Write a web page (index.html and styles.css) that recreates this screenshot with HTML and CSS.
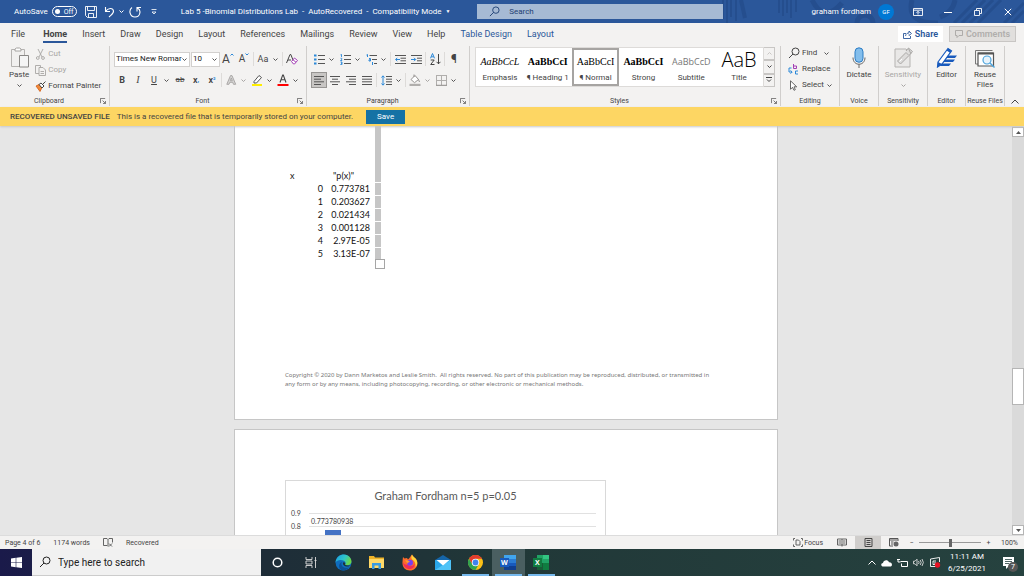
FILE: index.html
```html
<!DOCTYPE html>
<html lang="en">
<head>
<meta charset="utf-8">
<title>Lab 5 -Binomial Distributions Lab</title>
<link rel="stylesheet" href="styles.css">
</head>
<body>

<svg class="defs" aria-hidden="true">
  <symbol id="chev" viewBox="0 0 5 3"><path d="M.5 .5l2 2 2-2" fill="none" stroke="currentColor"/></symbol>
  <symbol id="caret" viewBox="0 0 8 5"><path d="M.5 4.500L4 1l3.500 3.500" fill="none" stroke="currentColor"/></symbol>
  <symbol id="launch" viewBox="0 0 7 7"><path d="M.5 6V.5H6M3 3l3 3M6.5 3.500v3h-3" fill="none" stroke="currentColor" stroke-width=".8"/></symbol>
  <symbol id="lens" viewBox="0 0 12 12"><circle cx="7.500" cy="4.500" r="3.500" fill="none" stroke="currentColor"/><path d="M5 7L1 11" stroke="currentColor"/></symbol>
</svg>

<header class="titlebar">
  <svg class="pattern" viewBox="0 0 304 23" preserveAspectRatio="xMaxYMin slice" aria-hidden="true">
    <g stroke="#254e8e" fill="none">
      <path stroke-width="2" d="M3 0v19M7 0v23M11 0v17M16 0v21M59 0v13M63 0v16M67 0v13M71 0v18M76 0v12"/>
      <path stroke-width="4" d="M21 0l4 18"/>
      <path stroke-width="5" d="M92 0q12 24 30 3M137 23a8 8 0 0 1 16 0M192 0q-6 24 26 23M235 0q-2 12-15 17"/>
      <path stroke-width="3" d="M234 23L257 0M242 23L265 0M250 23L273 0M258 23L281 0M284 23L304 3M292 23L304 11"/>
    </g>
  </svg>
  <div class="title-left">
    <label class="autosave" for="autosave">AutoSave <span class="switch"><input type="checkbox" id="autosave">Off</span></label>
    <div class="quick">
      <button aria-label="Save"><svg width="12" height="12" viewBox="0 0 12 12"><path d="M.5 .5h11v11h-9l-2-2zM2.500 .5v4h7v-4M3.500 11.500v-4h5v4" fill="none" stroke="#fff" stroke-width=".9"/></svg></button>
      <button aria-label="Undo"><svg width="11" height="12" viewBox="0 0 11 12"><path d="M1.500 1v4.500H6M1.500 5.500C4 1.500 9 1.500 9.500 5c.3 2.500-2.500 4-4.500 6" fill="none" stroke="#fff" stroke-width="1.100"/></svg></button>
      <svg class="chev" width="5" height="3"><use href="#chev"/></svg>
      <button class="redo" aria-label="Redo"><svg width="12" height="12" viewBox="0 0 12 12"><path d="M3 1.500C-.5 4 .5 11 6 11s6.500-7 2.500-9M8 5.500V1.500h4" fill="none" stroke="#fff" stroke-width="1.100"/></svg></button>
      <button aria-label="Customize"><svg width="6" height="6" viewBox="0 0 6 6"><path d="M.5 .5h5M1 3l2 2 2-2z" fill="none" stroke="#fff" stroke-width=".8"/></svg></button>
    </div>
    <h1>Lab 5 -Binomial Distributions Lab&nbsp; -&nbsp; AutoRecovered&nbsp; -&nbsp; Compatibility Mode <span class="tri">▼</span></h1>
  </div>
  <div class="title-search">
    <svg width="11" height="11"><use href="#lens"/></svg>
    <input type="text" placeholder="Search" aria-label="Search">
  </div>
  <div class="title-right">
    <span>graham fordham</span>
    <span class="avatar">GF</span>
    <button aria-label="Ribbon display"><svg width="10" height="8" viewBox="0 0 10 8"><path d="M.5 .5h9v7h-9zM.5 2.200h9M5 6.500v-3M3.500 4.800L5 3.300l1.500 1.500" fill="none" stroke="#fff" stroke-width=".9"/></svg></button>
    <button aria-label="Minimize"><svg width="8" height="8" viewBox="0 0 8 8"><path d="M0 4.500h8" stroke="#fff"/></svg></button>
    <button aria-label="Restore"><svg width="8" height="8" viewBox="0 0 8 8"><path d="M.5 2.500h5v5h-5zM2.500 2.500v-2h5v5h-2" fill="none" stroke="#fff" stroke-width=".9"/></svg></button>
    <button aria-label="Close"><svg width="8" height="8" viewBox="0 0 8 8"><path d="M.8 .8l6.400 6.400M7.200 .8L.8 7.200" stroke="#fff"/></svg></button>
  </div>
</header>

<nav class="tabs">
  <a href="#" class="file">File</a>
  <a href="#" class="active">Home</a>
  <a href="#">Insert</a>
  <a href="#">Draw</a>
  <a href="#">Design</a>
  <a href="#">Layout</a>
  <a href="#">References</a>
  <a href="#">Mailings</a>
  <a href="#">Review</a>
  <a href="#">View</a>
  <a href="#">Help</a>
  <a href="#" class="context">Table Design</a>
  <a href="#" class="context">Layout</a>
  <div class="tab-actions">
    <button class="share"><svg width="9" height="9" viewBox="0 0 9 9"><path d="M3 3.500H.5v5h7V6M2.500 6C3 3.500 4.500 3 6 3V1l2.500 2.500L6 5.500v-1" fill="none" stroke="#2b579a" stroke-width=".9"/></svg>Share</button>
    <button class="comments" disabled><svg width="8" height="8" viewBox="0 0 8 8"><path d="M.5 .5h7v5H4l-2 2v-2H.5z" fill="none" stroke="#a8a6a4" stroke-width=".9"/></svg>Comments</button>
  </div>
</nav>

<section class="ribbon">
  <div class="group clipboard">
    <div class="body">
      <button class="big">
        <svg width="19" height="21" viewBox="0 0 19 21"><path d="M1.500 2.500h13v17h-13z" fill="#f1f0ef" stroke="#b5b3b1"/><path d="M5 4V2l1.500-1h3L11 2v2z" fill="#fff" stroke="#a5a3a1"/><path d="M9.500 8.500h9v11.500h-9z" fill="#f5f5f5" stroke="#8a8886"/></svg>
        Paste
        <svg class="chev" width="5" height="3"><use href="#chev"/></svg>
      </button>
      <div class="stack">
        <button class="off"><svg width="11" height="11" viewBox="0 0 11 11"><g fill="none" stroke="#a8a6a4" stroke-width=".9"><path d="M3 0l4 8M8 0L4 8"/><circle cx="2.800" cy="9" r="1.400"/><circle cx="8" cy="9" r="1.400"/></g></svg>Cut</button>
        <button class="off"><svg width="11" height="11" viewBox="0 0 11 11"><g fill="#f3f2f1" stroke="#a8a6a4" stroke-width=".9"><path d="M.5 .5h5v8h-5z"/><path d="M4 2.500h4l2.500 2.500v5.500H4z"/><path d="M5.500 6.500h3.500M5.500 8.500h3.500"/></g></svg>Copy</button>
        <button><svg width="11" height="11" viewBox="0 0 11 11"><path d="M1 5l3-1.500 3 3L5 10.500z" fill="#f08a3c" stroke="#d35c12" stroke-width=".8"/><path d="M4 3.500L6 2l3 3-2 2zM8 3l2.500-2.500" fill="#fff" stroke="#444" stroke-width="1"/></svg>Format Painter</button>
      </div>
    </div>
    <div class="label more">Clipboard <svg class="launch" width="6" height="6"><use href="#launch"/></svg></div>
  </div>

  <div class="group font">
    <div class="body rows">
      <div class="row">
        <span class="combo name"><input type="text" value="Times New Romar" aria-label="Font"><svg class="chev" width="5" height="3"><use href="#chev"/></svg></span>
        <span class="combo size"><input type="text" value="10" aria-label="Font size"><svg class="chev" width="5" height="3"><use href="#chev"/></svg></span>
        <button class="ico grow" aria-label="Grow font">A<svg width="4" height="3" viewBox="0 0 4 3"><path d="M.5 2.500L2 1l1.500 1.500" fill="none" stroke="#2b88d8"/></svg></button>
        <button class="ico shrink" aria-label="Shrink font">A<svg width="4" height="3" viewBox="0 0 4 3"><path d="M.5 .5L2 2 3.500 .5" fill="none" stroke="#2b88d8"/></svg></button>
        <i class="sep"></i>
        <button class="ico case">Aa</button><svg class="chev" width="5" height="3"><use href="#chev"/></svg>
        <i class="sep"></i>
        <button class="ico" aria-label="Clear formatting"><svg width="12" height="12" viewBox="0 0 12 12"><path d="M.5 10L4 1.500h.8L7 7M2 7h3" fill="none" stroke="#444" stroke-width="1"/><path d="M5.500 8.500l3-3.500 3 2.500-3 3.500h-1z" fill="#fff" stroke="#a33fb5"/><path d="M7 6.800l3 2.500" stroke="#a33fb5"/></svg></button>
      </div>
      <div class="row">
        <button class="ico bold">B</button>
        <button class="ico italic">I</button>
        <button class="ico under">U</button><svg class="chev" width="5" height="3"><use href="#chev"/></svg>
        <button class="ico strike">ab</button>
        <button class="ico script">x<sub>,</sub></button>
        <button class="ico script">x<sup>²</sup></button>
        <i class="sep"></i>
        <button class="ico" aria-label="Text effects"><svg width="11" height="10" viewBox="0 0 11 10"><path d="M.8 9.300L4.500 .6h1.500l3.700 8.700H7.500l-.8-2H3.800l-.8 2zM4.300 5.700h2L5.300 3z" fill="#d6d5d4" stroke="#a5a3a1" stroke-width=".9"/></svg></button><svg class="chev dim" width="5" height="3"><use href="#chev"/></svg>
        <button class="ico" aria-label="Highlight"><svg width="12" height="12" viewBox="0 0 12 12"><path d="M3 7.500L8 1.500l2.500 2-5 5.500H3z" fill="#fff" stroke="#555"/><path d="M1 10h10v2H1z" fill="#ffee00"/></svg></button><svg class="chev" width="5" height="3"><use href="#chev"/></svg>
        <button class="ico" aria-label="Font color"><svg width="12" height="12" viewBox="0 0 12 12"><path d="M3 8.500L5.700 1h.6L9 8.500M4 5.800h4" fill="none" stroke="#444" stroke-width="1.100"/><path d="M.5 10h11v2H.5z" fill="#f00"/></svg></button><svg class="chev" width="5" height="3"><use href="#chev"/></svg>
      </div>
    </div>
    <div class="label more">Font <svg class="launch" width="6" height="6"><use href="#launch"/></svg></div>
  </div>

  <div class="group paragraph">
    <div class="body rows">
      <div class="row">
        <button class="ico" aria-label="Bullets"><svg width="11" height="11" viewBox="0 0 11 11"><path d="M0 1.500h2.500M0 5.500h2.500M0 9.500h2.500" stroke="#2b88d8" stroke-width="2"/><path d="M4 1.500h7M4 5.500h7M4 9.500h7" stroke="#555"/></svg></button><svg class="chev" width="5" height="3"><use href="#chev"/></svg>
        <button class="ico" aria-label="Numbering"><svg width="11" height="11" viewBox="0 0 11 11"><path d="M.5 .8l1-.5V3M.5 4.300h1.300v1L.5 6.500h1.700M.5 8h1.500v1.200H1h1v1.400H.3" fill="none" stroke="#2b88d8" stroke-width=".9"/><path d="M4 1.500h7M4 5.500h7M4 9.500h7" stroke="#555"/></svg></button><svg class="chev" width="5" height="3"><use href="#chev"/></svg>
        <button class="ico" aria-label="Multilevel list"><svg width="11" height="11" viewBox="0 0 11 11"><path d="M.5 1l1-.5V3M3 4.500h1.500V7H3V5.800h1.500M6.500 8v3" fill="none" stroke="#2b88d8"/><path d="M3.500 1.500H11M6 5.500h5M8 9.500h3" stroke="#555"/></svg></button><svg class="chev" width="5" height="3"><use href="#chev"/></svg>
        <i class="sep"></i>
        <button class="ico" aria-label="Decrease indent"><svg width="11" height="9" viewBox="0 0 11 9"><path d="M0 .5h11M5.500 3.200H11M5.500 5.800H11M0 8.500h11" stroke="#555"/><path d="M5 4.500H.8M2.300 2.800L.6 4.500l1.700 1.700" fill="none" stroke="#2b88d8"/></svg></button>
        <button class="ico" aria-label="Increase indent"><svg width="11" height="9" viewBox="0 0 11 9"><path d="M0 .5h11M6 3.200h5M6 5.800h5M0 8.500h11" stroke="#555"/><path d="M0 4.500h4.500M3 2.800l1.700 1.700L3 6.200" fill="none" stroke="#2b88d8"/></svg></button>
        <i class="sep"></i>
        <button class="ico" aria-label="Sort"><svg width="11" height="12" viewBox="0 0 11 12"><path d="M.5 5.300L2.500 .5l2 4.800M1.200 3.800h2.600" fill="none" stroke="#2b88d8"/><path d="M.7 7h3.500L.7 11.500h3.800M8.500 1v10M6.500 8.800l2 2 2-2" fill="none" stroke="#444"/></svg></button>
        <i class="sep"></i>
        <button class="ico pilcrow">¶</button>
      </div>
      <div class="row">
        <button class="ico on" aria-label="Align left"><svg width="10" height="9" viewBox="0 0 10 9"><path d="M0 .5h10M0 3.200h7M0 5.800h10M0 8.500h7" stroke="#555"/></svg></button>
        <button class="ico" aria-label="Center"><svg width="10" height="9" viewBox="0 0 10 9"><path d="M0 .5h10M2 3.200h6M0 5.800h10M2 8.500h6" stroke="#555"/></svg></button>
        <button class="ico" aria-label="Align right"><svg width="10" height="9" viewBox="0 0 10 9"><path d="M0 .5h10M3 3.200h7M0 5.800h10M3 8.500h7" stroke="#555"/></svg></button>
        <button class="ico" aria-label="Justify"><svg width="10" height="9" viewBox="0 0 10 9"><path d="M0 .5h10M0 3.200h10M0 5.800h10M0 8.500h10" stroke="#555"/></svg></button>
        <i class="sep"></i>
        <button class="ico" aria-label="Line spacing"><svg width="11" height="11" viewBox="0 0 11 11"><path d="M2 1v9M.5 2.500L2 .8l1.500 1.700M.5 8.500L2 10.200l1.500-1.700" fill="none" stroke="#2b88d8"/><path d="M5 1.500h6M5 4.200h6M5 6.800h6M5 9.500h6" stroke="#555"/></svg></button><svg class="chev" width="5" height="3"><use href="#chev"/></svg>
        <i class="sep"></i>
        <button class="ico" aria-label="Shading"><svg width="12" height="12" viewBox="0 0 12 12"><path d="M2 5.500L6 1.500l3.500 4-4 3.200zM5 3V.5M9.500 5.500l1 2.500" fill="#fff" stroke="#8a8886" stroke-width=".9"/><path d="M.5 9.800h11V12H.5z" fill="#b0aeac"/></svg></button><svg class="chev dim" width="5" height="3"><use href="#chev"/></svg>
        <button class="ico" aria-label="Borders"><svg width="11" height="11" viewBox="0 0 11 11"><path d="M.5 0v10M5.500 0v10M10.500 0v10M0 .5h11M0 5.500h11" stroke="#b0aeac"/><path d="M0 10.300h11" stroke="#8a8886"/></svg></button><svg class="chev" width="5" height="3"><use href="#chev"/></svg>
      </div>
    </div>
    <div class="label more">Paragraph <svg class="launch" width="6" height="6"><use href="#launch"/></svg></div>
  </div>

  <div class="group styles">
    <div class="body">
      <div class="gallery">
        <button><span class="sample it">AaBbCcL</span>Emphasis</button>
        <button><span class="sample b">AaBbCcI</span>¶ Heading 1</button>
        <button class="picked"><span class="sample">AaBbCcI</span>¶ Normal</button>
        <button><span class="sample b">AaBbCcI</span>Strong</button>
        <button><span class="sample sub">AaBbCcD</span>Subtitle</button>
        <button><span class="sample ttl">AaB</span>Title</button>
      </div>
      <div class="gallery-nav">
        <button disabled aria-label="Up"><svg class="flip" width="5" height="3"><use href="#chev"/></svg></button>
        <button aria-label="Down"><svg width="5" height="3"><use href="#chev"/></svg></button>
        <button aria-label="More"><svg width="6" height="6" viewBox="0 0 6 6"><path d="M0 .5h6M1 2.500l2 2 2-2" fill="none" stroke="#444"/></svg></button>
      </div>
    </div>
    <div class="label more">Styles <svg class="launch" width="6" height="6"><use href="#launch"/></svg></div>
  </div>

  <div class="group editing">
    <div class="body">
      <div class="stack">
        <button><svg width="12" height="12"><use href="#lens"/></svg>Find <svg class="chev find" width="5" height="3"><use href="#chev"/></svg></button>
        <button><svg width="12" height="11" viewBox="0 0 12 11"><path d="M5.500 0v4.500h3v-2.500h-3" fill="none" stroke="#a33fb5"/><path d="M3.500 4H1v4h3M2.500 6.500L4.200 8 2.500 9.700M10 7H7.500v3H10" fill="none" stroke="#2b88d8"/></svg>Replace</button>
        <button><svg width="12" height="11" viewBox="0 0 12 11"><path d="M2.500 .8v8.500l2-2 1.500 3 1.300-.6L6 6.800h2.700z" fill="#fff" stroke="#555" stroke-width=".9"/></svg>Select <svg class="chev" width="5" height="3"><use href="#chev"/></svg></button>
      </div>
    </div>
    <div class="label">Editing</div>
  </div>

  <div class="group voice">
    <div class="body">
      <button class="big"><svg width="14" height="21" viewBox="0 0 14 21"><rect x="3" y=".8" width="8" height="14.500" rx="4" fill="#83beec" stroke="#2b7cc4"/><path d="M1 10.500c0 9 12 9 12 0M7 17.500V21" fill="none" stroke="#666"/></svg>Dictate</button>
    </div>
    <div class="label">Voice</div>
  </div>

  <div class="group sensitivity">
    <div class="body">
      <button class="big off"><svg width="19" height="21" viewBox="0 0 19 21"><path d="M1 2h11l4 4v14H1z" fill="#e9e8e7" stroke="#b5b3b1"/><path d="M3.500 14L12 5.500l3 3L6.500 17zM12 4l2.500-3 4 3.500-3 3.500M14.500 1.500L17 7" fill="#dddcdb" stroke="#aaa8a6"/><path d="M5.500 14.500L8 12" stroke="#fff"/></svg>Sensitivity<svg class="chev" width="5" height="3"><use href="#chev"/></svg></button>
    </div>
    <div class="label">Sensitivity</div>
  </div>

  <div class="group editor">
    <div class="body">
      <button class="big"><svg width="21" height="21" viewBox="0 0 21 21"><path d="M8 8.500h13l-2 2.600H7zM6 12.500h13l-2 2.600H5zM5 16.500h10l-2 2.600H4z" fill="#185abd"/><path d="M2 15L12 1.500l3.500 2.300L6 17l-4.500 3z" fill="#fff" stroke="#185abd" stroke-width="1.200"/><path d="M2 15l4 2-4.500 3zM12 1.500l3.500 2.300-1.500 2-3.500-2.300z" fill="#185abd"/></svg>Editor</button>
    </div>
    <div class="label">Editor</div>
  </div>

  <div class="group reuse">
    <div class="body">
      <button class="big"><svg width="21" height="21" viewBox="0 0 21 21"><path d="M1.500 17V3.500h17M1.500 17H4" fill="none" stroke="#777"/><path d="M4 6h15.500v13H4z" fill="#fff" stroke="#555" stroke-width="1.200"/><path d="M4 6.500h15.500" stroke="#555" stroke-width="2"/><circle cx="13" cy="13" r="4" fill="#e8f3fb" stroke="#4ba3dc" stroke-width="1.200"/><path d="M16 16l4.500 4.500" stroke="#4ba3dc" stroke-width="1.400"/></svg>Reuse<br>Files</button>
    </div>
    <div class="label">Reuse Files</div>
  </div>

  <button class="collapse" aria-label="Collapse ribbon"><svg width="8" height="5"><use href="#caret"/></svg></button>
</section>

<div class="message">
  <strong>RECOVERED UNSAVED FILE</strong>
  <span>This is a recovered file that is temporarily stored on your computer.</span>
  <button>Save</button>
</div>

<main class="workspace">
  <div class="pages">
    <article class="page first">
      <div class="table-wrap">
        <table>
          <tr><th>x</th><th class="px">"p(x)"</th><td class="mark"></td></tr>
          <tr><td>0</td><td>0.773781</td><td class="mark"></td></tr>
          <tr><td>1</td><td>0.203627</td><td class="mark"></td></tr>
          <tr><td>2</td><td>0.021434</td><td class="mark"></td></tr>
          <tr><td>3</td><td>0.001128</td><td class="mark"></td></tr>
          <tr><td>4</td><td>2.97E-05</td><td class="mark"></td></tr>
          <tr><td>5</td><td>3.13E-07</td><td class="mark"></td></tr>
        </table>
        <span class="handle"></span>
      </div>
      <p class="copyright">Copyright © 2020 by Dann Marketos and Leslie Smith.&nbsp; All rights reserved. No part of this publication may be reproduced, distributed, or transmitted in<br>any form or by any means, including photocopying, recording, or other electronic or mechanical methods.</p>
    </article>
    <article class="page second">
      <figure class="chart">
        <figcaption>Graham Fordham n=5 p=0.05</figcaption>
        <svg width="320" height="60" viewBox="0 0 320 60">
          <path d="M23 9.500h287M23 22.500h287" stroke="#e1e1e1"/>
          <rect x="39" y="26" width="16" height="34" fill="#4472c4"/>
          <text x="5" y="12">0.9</text>
          <text x="5" y="25">0.8</text>
          <text x="25" y="20">0.773780938</text>
        </svg>
      </figure>
    </article>
  </div>
  <div class="scrollbar">
    <button aria-label="Scroll up"><svg width="5" height="3" viewBox="0 0 5 3"><path d="M0 3L2.500 0 5 3z" fill="#555"/></svg></button>
    <div class="track"><div class="thumb"></div></div>
    <button aria-label="Scroll down"><svg width="5" height="3" viewBox="0 0 5 3"><path d="M0 0l2.500 3L5 0z" fill="#555"/></svg></button>
  </div>
</main>

<footer class="status">
  <span>Page 4 of 6</span>
  <span>1174 words</span>
  <svg width="10" height="9" viewBox="0 0 10 9"><path d="M5 1.500L4 .5H.5v7H4l1 1M5 8V1.500L6 .5h3.500v4M6 5.500l3 3M9 5.500l-3 3" fill="none" stroke="#555" stroke-width=".9"/></svg>
  <span>Recovered</span>
  <div class="status-right">
    <button class="focus"><svg width="10" height="9" viewBox="0 0 10 9"><path d="M2 .5H.5v2M8 .5h1.500v2M2 8.500H.5v-2M8 8.500h1.500v-2M3 2h2.500L7 3.500V7H3z" fill="none" stroke="#555" stroke-width=".9"/></svg>Focus</button>
    <button class="view" aria-label="Read mode"><svg width="10" height="9" viewBox="0 0 10 9"><path d="M.5 1h9v6h-9zM5 1v7.500M1.500 3h2.500M1.500 5h2.500M6 3h2.500M6 5h2.500" fill="none" stroke="#555" stroke-width=".9"/></svg></button>
    <button class="view on" aria-label="Print layout"><svg width="9" height="9" viewBox="0 0 9 9"><path d="M1 .5h7v8H1zM2.500 2.500h4M2.500 4.500h4M2.500 6.500h4" fill="none" stroke="#444"/></svg></button>
    <button class="view" aria-label="Web layout"><svg width="10" height="9" viewBox="0 0 10 9"><path d="M.5 8V.5h8.500V3M.5 2h8M2 4h2.500M2 6h2M.5 8H4" fill="none" stroke="#555"/><circle cx="7" cy="6" r="2.500" fill="#666"/></svg></button>
    <span class="zoom-step">−</span>
    <input type="range" min="10" max="190" value="100" aria-label="Zoom">
    <span class="zoom-step">+</span>
    <span class="pct">100%</span>
  </div>
</footer>

<div class="taskbar">
  <button class="start" aria-label="Start"><svg width="11" height="11" viewBox="0 0 11 11"><path d="M0 1.500l4.700-.7v4.400H0zM5.300 .7L11 0v5.200H5.300zM0 5.800h4.700v4.400L0 9.500zM5.300 5.800H11V11l-5.700-.8z" fill="#fff"/></svg></button>
  <label class="task-search"><svg width="12" height="12"><use href="#lens"/></svg><input type="text" placeholder="Type here to search"></label>
  <div class="apps">
    <button aria-label="Cortana"><svg width="11" height="11" viewBox="0 0 11 11"><circle cx="5.500" cy="5.500" r="4.300" fill="none" stroke="#fff" stroke-width="1.500"/></svg></button>
    <button aria-label="Task view"><svg width="12" height="11" viewBox="0 0 12 11"><path d="M1 0v2.500h6V0M1 11V8.500h6V11M1 4h6v3H1zM10.500 0v11M9.500 3.500h2" fill="none" stroke="#ddd" stroke-width=".9"/></svg></button>
    <button aria-label="Edge"><svg width="17" height="17" viewBox="0 0 17 17"><defs><linearGradient id="edge" x2="1" y2=".4"><stop offset="0" stop-color="#1b9de2"/><stop offset=".6" stop-color="#2fc7c9"/><stop offset="1" stop-color="#6ad54a"/></linearGradient></defs><circle cx="8.500" cy="8.500" r="8" fill="#0f6cbd"/><path d="M.5 8.500C1 3 5 .5 9 .5c5 0 7.500 4 7.500 7 0 3-3 4.500-6.500 3.500 1-1 1.200-3-1-4.200C6 5 1.500 6 .5 8.500z" fill="url(#edge)"/><path d="M7 8c-2 3 1 7 7 5.500-2 2.500-5 3.500-7.500 2.800C3 14 3.500 9 7 8z" fill="#0c4f95"/><path d="M9 8c-2 1-1 4 2.500 4.500 2 .3 3.500-.5 4.500-1.500-2 .8-4.500.8-6-.2.5-.8.200-2-1-2.800z" fill="#1f3137"/></svg></button>
    <button aria-label="File Explorer"><svg width="15" height="13" viewBox="0 0 15 13"><path d="M0 0h5l1 1.500h9V12H0z" fill="#f0b429"/><path d="M0 3h15v9H0z" fill="#ffd968"/><path d="M3 7h9v6h-2.500V9.500h-4V13H3z" fill="#3a9be0"/></svg></button>
    <button aria-label="Firefox"><svg width="16" height="17" viewBox="0 0 16 17"><path d="M1 3l1.500 1.500L5 4l1 1.500C8 4 8.500 2 10 .5c.5 2 3 3 4 4.500 4 6-1 11.500-6 11.500S0 13 .5 8C.6 6 .8 4.500 1 3z" fill="#ff6a2b"/><path d="M10 .5c.5 2 3 3 4 4.500 2 3.500 1.300 6-.5 8 .5-4-1-6-3.500-7.500-1-1.500-.8-3.500 0-5z" fill="#ffd43a"/><path d="M1 8c0 5 4 7.500 7.500 7 3-.4 4.500-3 4-5.500-1 3-5 3.500-6.500 1C3.500 11 1.500 10 1 8z" fill="#f02d5a"/><circle cx="8" cy="8.800" r="3" fill="#7a3ff2"/><path d="M3 6.500c2-.5 4 .3 5 1.500-2 0-2.500 1-2 2z" fill="#ff9a2e"/></svg></button>
    <button aria-label="Mail"><svg width="16" height="15" viewBox="0 0 16 15"><path d="M0 5l8-5 8 5z" fill="#1565a8"/><path d="M0 5h16v10H0z" fill="#2aa7ea"/><path d="M0 15l16-10v10z" fill="#4fc3f7"/><path d="M1.500 5h13L8 10.500z" fill="#fff"/></svg></button>
    <button class="open" aria-label="Chrome"><svg width="15" height="15" viewBox="0 0 15 15"><circle cx="7.500" cy="7.500" r="7.500" fill="#fbc116"/><path d="M1 3.750A7.500 7.500 0 0 1 14 3.750H7.500L4.300 9.400z" fill="#e33b2e"/><path d="M1 3.750A7.500 7.500 0 0 0 7.500 15L10.700 9.400H4.300z" fill="#31a350"/><circle cx="7.500" cy="7.500" r="3.700" fill="#fff"/><circle cx="7.500" cy="7.500" r="2.900" fill="#3f83ee"/></svg></button>
    <button class="open current" aria-label="Word"><svg width="17" height="15" viewBox="0 0 17 15"><path d="M4 0h12v4H4z" fill="#41a5ee"/><path d="M4 4h12v4H4z" fill="#2b7cd3"/><path d="M4 8h12v3H4z" fill="#185abd"/><path d="M4 11h12v4H4z" fill="#103f91"/><path d="M0 3h9v9H0z" fill="#185abd"/><text x="1" y="10" class="app-letter">W</text></svg></button>
    <button class="open" aria-label="Excel"><svg width="17" height="15" viewBox="0 0 17 15"><path d="M4 0h12v15H4z" fill="#21a366"/><path d="M10 0h6v4h-6z" fill="#33c481"/><path d="M10 8h6v7h-6z" fill="#107c41"/><path d="M4 8h6v7H4z" fill="#185c37"/><path d="M0 3h9v9H0z" fill="#107c41"/><text x="2" y="10" class="app-letter">X</text></svg></button>
  </div>
  <div class="tray">
    <svg width="8" height="5"><use href="#caret"/></svg>
    <svg width="11" height="8" viewBox="0 0 11 8"><path d="M2.500 7.500C-.5 7.500-.3 4 2 4c.5-3 4.500-4 6-.8C11.500 3 12 7.500 9 7.500z" fill="#fff"/></svg>
    <svg width="11" height="8" viewBox="0 0 11 8"><path d="M3.500 2.500h7v5h-6v-3M0 .5h3M1 0v3h2.500" fill="none" stroke="#fff"/></svg>
    <svg width="11" height="9" viewBox="0 0 11 9"><path d="M.5 3.200h1.500L4 1.200v6.600L2 5.800H.5zM5.500 3q1.200 1.500 0 3M7.200 2q2 2.500 0 5M9 1q2.700 3.500 0 7" fill="none" stroke="#ddd" stroke-width=".9"/></svg>
    <svg width="12" height="11" viewBox="0 0 12 11"><path d="M1.500 2l9-1.500M1.500 2v7.500h6M10.500 .5V5M4 4h3M4 4v3.500h2M5 6h2" fill="none" stroke="#fff" stroke-width=".9"/><circle cx="8.500" cy="8" r="2.700" fill="#e81123"/></svg>
    <time>11:11 AM<br>6/25/2021</time>
    <span class="notify"><svg width="11" height="12" viewBox="0 0 11 12"><path d="M0 0h11v9H6l-3 3V9H0z" fill="#fff"/><path d="M2 2.500h7M2 4.500h7M2 6.500h4" stroke="#25403f" stroke-width=".8"/></svg><b>7</b></span>
  </div>
</div>

</body>
</html>
```
FILE: styles.css
```css
* {
  box-sizing: border-box;
}

body {
  margin: 0;
  height: 100vh;
  display: flex;
  flex-direction: column;
  overflow: hidden;
  font-family: Roboto, "Noto Sans", sans-serif;
  font-size: 8px;
  line-height: 10px;
  color: #444;
  background: #f3f2f1;
}

button, input {
  font: inherit;
  color: inherit;
  margin: 0;
  padding: 0;
  border: none;
  background: none;
}

button {
  display: flex;
  align-items: center;
  justify-content: center;
}

input {
  min-width: 0;
  outline: none;
}

svg {
  flex: none;
  display: block;
}

.defs {
  position: absolute;
  width: 0;
  height: 0;
}

.flip {
  transform: rotate(180deg);
}

/* title bar */
.titlebar {
  position: relative;
  flex: none;
  height: 23px;
  display: grid;
  grid-template-columns: 46.6% 24% 1fr;
  align-items: center;
  background: #2b579a;
  color: #fff;
}

.pattern {
  position: absolute;
  right: 0;
  top: 0;
  width: 304px;
  height: 23px;
}

.title-left, .title-right, .title-search {
  position: relative;
  display: flex;
  align-items: center;
}

.title-left {
  padding-left: 14px;
}

.autosave {
  display: flex;
  align-items: center;
  gap: 4px;
}

.switch {
  display: flex;
  align-items: center;
  gap: 4px;
  width: 25px;
  height: 11px;
  padding-left: 2px;
  border: 1px solid #fff;
  border-radius: 6px;
  font-size: 7px;
}

.switch input {
  appearance: none;
  width: 5px;
  height: 5px;
  border-radius: 50%;
  background: #fff;
}

.quick {
  display: flex;
  align-items: center;
  gap: 7px;
  margin-left: 8px;
}

.quick .chev {
  margin: 0 -2px 0 -3px;
  color: #fff;
}

.quick .redo {
  margin-right: 3px;
}

.titlebar h1 {
  margin: 0 0 0 24px;
  font-size: 8px;
  font-weight: normal;
  white-space: nowrap;
}

.tri {
  margin-left: 2px;
  font-size: 5px;
  vertical-align: 1px;
}

.title-search {
  height: 15px;
  padding-left: 12px;
  gap: 9px;
  background: #a6bad4;
  color: #1e3f73;
}

.title-search input {
  flex: 1;
}

::placeholder {
  color: inherit;
  opacity: 1;
}

.title-right {
  justify-content: flex-end;
  padding-right: 11px;
}

.title-right button {
  width: 10px;
  margin-left: 20px;
}

.title-right .avatar {
  width: 16px;
  height: 16px;
  margin: 0 -1px 0 7px;
  border-radius: 50%;
  background: #0078d4;
  font-size: 6px;
  line-height: 16px;
  text-align: center;
}

/* tabs */
.tabs {
  flex: none;
  height: 22px;
  display: flex;
  align-items: center;
  gap: 15px;
  padding: 0 8px 0 11px;
  font-size: 9px;
}

.tabs a {
  padding-top: 2px;
  line-height: 13px;
  border-bottom: 2px solid transparent;
  color: #444;
  text-decoration: none;
  white-space: nowrap;
}

.tabs .file {
  margin-right: 3px;
}

.tabs .active {
  font-weight: bold;
  border-color: #2b579a;
}

.tabs .context {
  color: #2b579a;
}

.tab-actions {
  display: flex;
  gap: 6px;
  margin-left: auto;
}

.tab-actions button {
  height: 16px;
  gap: 3px;
  font-weight: 600;
}

.tab-actions .share {
  width: 45px;
  background: #fff;
  color: #2b579a;
}

.tab-actions .comments {
  width: 67px;
  border: 1px solid #c8c6c4;
  background: #e1dfdd;
  color: #b0aeac;
}

/* ribbon */
.ribbon {
  flex: none;
  height: 62px;
  display: flex;
}

.group {
  flex: none;
  display: flex;
  flex-direction: column;
  margin-top: 1px;
  margin-bottom: 1px;
  border-right: 1px solid #d0cecc;
}

.clipboard { width: 110px; }
.font { width: 197px; }
.paragraph { width: 163px; }
.styles { flex: 1; }
.editing { width: 59px; }
.voice { width: 39px; }
.sensitivity { width: 49px; }
.editor { width: 38px; }
.reuse { width: 39px; }

.body {
  flex: 1;
  display: flex;
  justify-content: center;
}

.label {
  position: relative;
  height: 10px;
  font-size: 7px;
  text-align: center;
  white-space: nowrap;
}

.label.more {
  padding-right: 11px;
}

.launch {
  position: absolute;
  right: 3px;
  top: 2px;
}

.chev {
  color: #555;
}

.dim, .off, .off .chev {
  color: #a8a6a4;
}

.big {
  flex-direction: column;
  justify-content: flex-start;
  padding-top: 1px;
}

.big svg {
  margin-bottom: 2px;
}

.big .chev {
  margin-top: 4px;
}

.clipboard .body {
  justify-content: flex-start;
  padding-left: 9px;
  gap: 6px;
}

.stack {
  display: flex;
  flex-direction: column;
}

.stack button {
  justify-content: flex-start;
  height: 16px;
  gap: 2px;
}

.editing .body {
  justify-content: flex-start;
  padding-left: 7px;
  margin-top: -1px;
}

.editing .chev {
  margin-left: 1px;
}

.editing .find {
  margin-left: 5px;
}

.rows {
  flex-direction: column;
  justify-content: flex-start;
  gap: 5px;
  padding: 5px 0 0 4px;
}

.row {
  display: flex;
  align-items: center;
  height: 16px;
}

.row .chev {
  margin: 0 3px 0 2px;
}

.ico {
  flex: none;
  width: 16px;
  height: 16px;
  font-size: 9px;
}

.ico.on {
  border: 1px solid #979593;
  background: #c8c6c4;
}

.sep {
  width: 1px;
  height: 14px;
  margin: 0 1px;
  background: #dddbd9;
}

.combo {
  display: flex;
  align-items: center;
  height: 15px;
  padding-left: 1px;
  border: 1px solid #d2d0ce;
  background: #fff;
  color: #222;
}

.combo input {
  flex: 1;
}

.combo .chev {
  margin: 0 2px 0 0;
}

.name {
  width: 76px;
  margin-right: 1px;
}

.size {
  width: 29px;
}

.grow {
  font-size: 12px;
}

.shrink {
  font-size: 10px;
}

.grow svg, .shrink svg {
  align-self: flex-start;
  margin-top: 2px;
}

.bold {
  font-weight: bold;
}

.italic {
  font-family: "Liberation Serif", serif;
  font-style: italic;
  font-size: 10px;
}

.under {
  text-decoration: underline;
}

.strike {
  font-size: 8px;
  text-decoration: line-through;
}

.script {
  font-weight: 600;
}

.script sub, .script sup {
  color: #2b88d8;
  font-size: 7px;
}

.pilcrow {
  font-size: 12px;
}

/* style gallery */
.styles .body {
  padding: 1px 5px 0;
}

.gallery {
  flex: 1;
  height: 40px;
  display: flex;
  border: 1px solid #dddbd9;
  background: #fff;
}

.gallery button {
  flex: 1;
  flex-direction: column;
  justify-content: flex-end;
  padding-bottom: 3px;
  min-width: 0;
  white-space: nowrap;
}

.gallery .picked {
  box-shadow: inset 0 0 0 2px #a6a4a2;
}

.sample {
  height: 22px;
  font-family: "Liberation Serif", serif;
  font-size: 10px;
  line-height: 22px;
  color: #000;
}

.it { font-style: italic; }
.b { font-weight: bold; }

.sub {
  font-family: "Open Sans", sans-serif;
  font-size: 9px;
  color: #777;
}

.ttl {
  font-family: "Open Sans", sans-serif;
  font-weight: 300;
  font-size: 20px;
  height: 24px;
}

.gallery-nav {
  width: 11px;
  height: 40px;
  display: flex;
  flex-direction: column;
}

.gallery-nav button {
  flex: 1;
  border: 1px solid #c8c6c4;
  border-left: none;
}

.gallery-nav button:disabled {
  color: #c8c6c4;
}

.collapse {
  width: 19px;
  align-items: flex-end;
  padding-bottom: 3px;
}

/* message bar */
.message {
  flex: none;
  height: 19px;
  display: flex;
  align-items: center;
  padding-left: 10px;
  background: #fdd663;
  position: relative;
  z-index: 1;
  box-shadow: 0 1px 2px #c8c8c8;
}

.message strong {
  margin-right: 7px;
  font-weight: 500;
}

.message button {
  width: 39px;
  height: 14px;
  margin-left: 13px;
  background: #1572a5;
  color: #fff;
}

/* document */
.workspace {
  flex: 1;
  min-height: 0;
  display: flex;
  background: #e6e6e6;
}

.pages {
  flex: 1;
  overflow: hidden;
  font-family: Lato, sans-serif;
}

.page {
  width: 544px;
  margin: 0 auto 9px;
  padding: 0 50px;
  border: 1px solid #c6c6c6;
  background: #fff;
}

.first {
  height: 294px;
  border-top: none;
}

.second {
  height: 400px;
  padding-top: 50px;
}

.table-wrap {
  position: relative;
  width: 96px;
}

table {
  border-collapse: separate;
  border-spacing: 0;
  width: 96px;
  font-size: 9px;
  line-height: 12px;
  color: #111;
}

td, th {
  height: 13px;
  padding: 0;
  font-weight: normal;
  text-align: right;
  vertical-align: bottom;
}

tr:first-child th {
  height: 56px;
  padding-left: 5px;
  text-align: left;
}

tr:first-child .px {
  padding-left: 10px;
}

th:first-child {
  width: 38px;
}

.mark {
  width: 11px;
  border-left: 5px solid #fff;
  border-top: 1px solid #fff;
  background: #c6c6c6;
}

tr:first-child .mark {
  border-top: none;
}

.handle {
  position: absolute;
  right: -4px;
  bottom: -9px;
  width: 10px;
  height: 10px;
  border: 1px solid #a6a6a6;
  background: #fff;
}

.copyright {
  margin: 111px 0 0;
  font-family: "Noto Sans", sans-serif;
  font-size: 6px;
  line-height: 9px;
  color: #777;
  white-space: nowrap;
}

.chart {
  width: 321px;
  height: 192px;
  margin: 0;
  border: 1px solid #d9d9d9;
}

.chart figcaption {
  padding-top: 7px;
  font-size: 11px;
  line-height: 16px;
  text-align: center;
  color: #595959;
}

.chart text {
  font-size: 7px;
  fill: #444;
}

/* scroll bar */
.scrollbar {
  width: 12px;
  display: flex;
  flex-direction: column;
  padding-top: 1px;
  background: #dadada;
}

.scrollbar button {
  height: 10px;
  border: 1px solid #b5b5b5;
  background: #fff;
}

.track {
  flex: 1;
  padding-top: 231px;
}

.thumb {
  height: 37px;
  border: 1px solid #b5b5b5;
  background: #fff;
}

/* status bar */
.status {
  flex: none;
  height: 14px;
  display: flex;
  align-items: center;
  gap: 13px;
  padding-left: 5px;
  border-top: 1px solid #dcdcdc;
  font-size: 7px;
}

.status-right {
  height: 100%;
  display: flex;
  align-items: center;
  margin-left: auto;
  padding-right: 6px;
}

.focus {
  gap: 1px;
  margin-right: 6px;
}

.view {
  width: 26px;
  height: 100%;
}

.view.on {
  background: #d0cecc;
}

.zoom-step {
  width: 9px;
  text-align: center;
}

input[type="range"] {
  appearance: none;
  width: 62px;
  height: 9px;
  margin: 0 3px;
  background: linear-gradient(#999, #999) center / 100% 1px no-repeat;
}

input[type="range"]::-webkit-slider-thumb {
  appearance: none;
  width: 3px;
  height: 8px;
  background: #666;
}

.pct {
  margin-left: 8px;
}

/* taskbar */
.taskbar {
  flex: none;
  height: 27px;
  display: flex;
  background: linear-gradient(90deg, #1a1a4a 0, #1e2d38 26%, #213838 50%, #26423f 100%);
  color: #fff;
}

.start {
  width: 32px;
}

.task-search {
  width: 229px;
  display: flex;
  align-items: center;
  gap: 7px;
  padding-left: 7px;
  border-bottom: 1px solid #ccc;
  background: #f1f1f1;
  color: #222;
  font-size: 10px;
}

.task-search input {
  flex: 1;
}

.apps {
  display: flex;
}

.apps button {
  width: 33px;
  position: relative;
}

.apps .open::after {
  content: "";
  position: absolute;
  left: 3px;
  right: 3px;
  bottom: 0;
  height: 2px;
  background: #76b9ed;
}

.apps .current {
  background: #4a5f61;
}

.app-letter {
  font: bold 7px "Open Sans", sans-serif;
  fill: #fff;
}

.tray {
  display: flex;
  align-items: center;
  gap: 5px;
  margin-left: auto;
  padding-right: 10px;
}

.tray time {
  margin-left: 2px;
  line-height: 12px;
  text-align: center;
}

.notify {
  position: relative;
  margin-left: 12px;
}

.notify b {
  position: absolute;
  left: 5px;
  top: 5px;
  width: 10px;
  height: 10px;
  border-radius: 50%;
  background: #555;
  font-size: 7px;
  font-weight: normal;
  line-height: 10px;
  text-align: center;
}
```
